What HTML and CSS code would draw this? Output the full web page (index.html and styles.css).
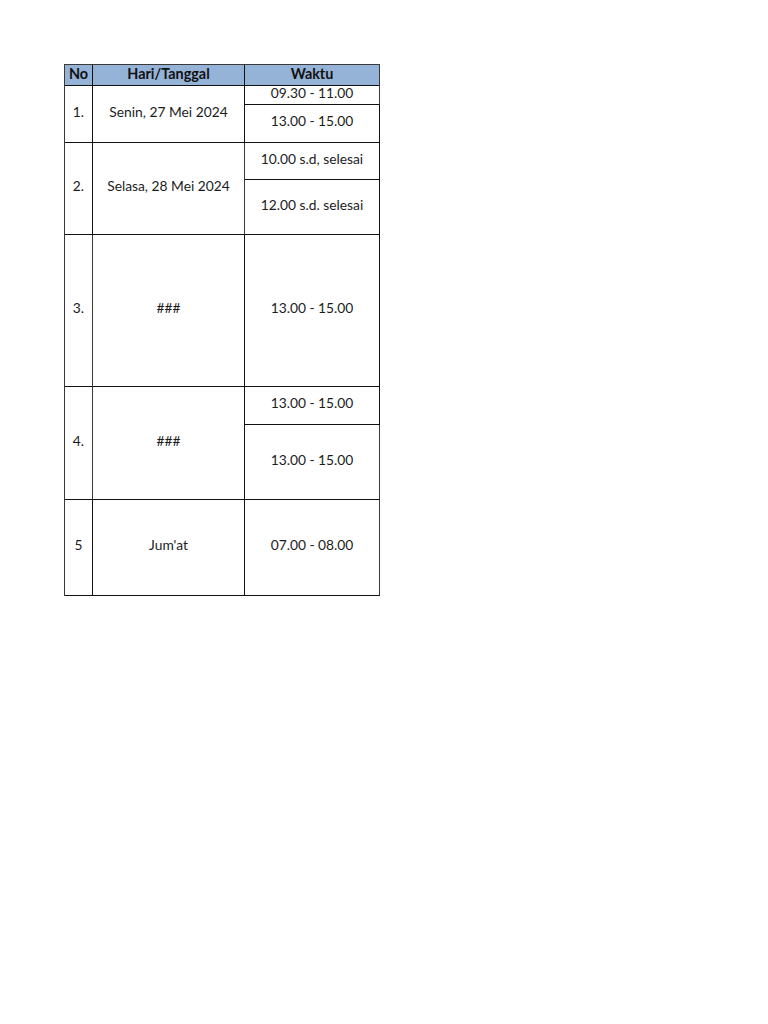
FILE: index.html
```html
<!DOCTYPE html>
<html lang="id">
<head>
<meta charset="utf-8">
<title>Jadwal</title>
<link rel="stylesheet" href="styles.css">
</head>
<body>
<div class="sheet">
  <div class="cell head">No</div>
  <div class="cell head">Hari/Tanggal</div>
  <div class="cell head">Waktu</div>

  <div class="cell span2">1.</div>
  <div class="cell span2">Senin, 27 Mei 2024</div>
  <div class="cell">09.30 - 11.00</div>
  <div class="cell">13.00 - 15.00</div>

  <div class="cell span2">2.</div>
  <div class="cell span2">Selasa, 28 Mei 2024</div>
  <div class="cell">10.00 s.d, selesai</div>
  <div class="cell">12.00 s.d. selesai</div>

  <div class="cell">3.</div>
  <div class="cell">###</div>
  <div class="cell">13.00 - 15.00</div>

  <div class="cell span2">4.</div>
  <div class="cell span2">###</div>
  <div class="cell">13.00 - 15.00</div>
  <div class="cell">13.00 - 15.00</div>

  <div class="cell">5</div>
  <div class="cell">Jum'at</div>
  <div class="cell">07.00 - 08.00</div>
</div>
</body>
</html>
```

FILE: styles.css
```css
html, body {
  margin: 0;
  padding: 0;
  background: #ffffff;
}

body {
  font-family: "Lato", "Liberation Sans", sans-serif;
  font-size: 13.8px;
  color: #1c1c1c;
}

.sheet {
  display: grid;
  grid-template-columns: 28px 152px 135px;
  grid-template-rows: 21px 19px 38px 37px 55px 152px 38px 75px 96px;
  width: max-content;
  margin: 64px 0 0 64px;
  border-left: 1px solid #3a3a3a;
  border-top: 1px solid #3a3a3a;
}

.cell {
  box-sizing: border-box;
  display: flex;
  align-items: center;
  justify-content: center;
  padding-bottom: 5px;
  border-right: 1px solid #111111;
  border-bottom: 1px solid #111111;
  white-space: nowrap;
  line-height: 1;
}

.cell:nth-child(3n) {
  border-right-color: #3a3a3a;
}

.head {
  background: #95b3d7;
  font-weight: 700;
  font-size: 14.4px;
  padding-bottom: 2px;
  color: #111111;
}

.span2 {
  grid-row: span 2;
}
```
